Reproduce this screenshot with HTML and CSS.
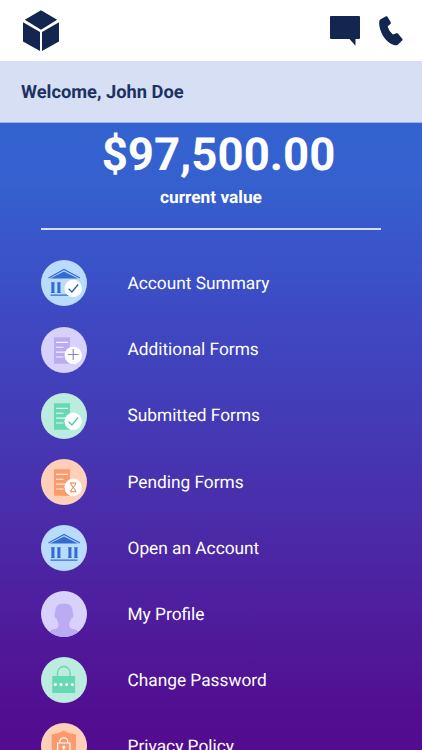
FILE: index.html
```html
<!DOCTYPE html>
<html lang="en">
<head>
<meta charset="utf-8">
<title>Account</title>
<link rel="stylesheet" href="styles.css">
</head>
<body>
<svg class="defs" width="0" height="0">
  <defs>
    <g id="bank-top">
      <path d="M7.5 18 23 9.4 39 18" fill="none" stroke="#346bd0" stroke-width="1.1"/>
      <path d="M9 18.4 23 11.6 37 18.4z" fill="#346bd0"/>
      <path d="M9.5 35.2h27" stroke="#346bd0" stroke-width="1.3"/>
      <path id="pillars" d="M10 22.300h3.700v1h-.3v8.700h.3v1H10v-1h.4v-8.700H10zM16.100 22.300h3.600v1h-.3v8.700h.3v1h-3.600v-1h.3v-8.700h-.3z" fill="#346bd0"/>
    </g>
    <g id="doc">
      <path d="M13 10.3h16v26.4H13z" fill="currentColor"/>
      <path d="M15 15.4h12M15 20.3h7.5M15 25.1h12M15 30h7.5" stroke="#fff" stroke-opacity=".85" stroke-width="1.1"/>
      <circle cx="32.2" cy="28.3" r="8.7" fill="#fff"/>
    </g>
    <path id="check" d="M27.6 28.8l3.3 3.2 6.2-7.5" fill="none" stroke-width="1.3"/>
  </defs>
</svg>
<header class="topbar">
  <svg class="logo" viewBox="0 0 36 42" width="36" height="42"><path d="M18 .3 34.2 9.8 18 19.7 1.8 9.8zM0 12.3l17 9.8v19L0 31.4zM36 12.3 19 22.1v19l17-9.7z"/></svg>
  <svg class="chat" viewBox="0 0 30 30" width="30" height="30"><path d="M1 0h28q1 0 1 1v21q0 1-1 1h-3.500v6.700L19.500 23H1q-1 0-1-1V1q0-1 1-1z"/></svg>
  <svg class="phone" viewBox="0 0 24 30" width="24" height="30"><path d="M1.600 3.200 7 .3q1-.5 1.500.5l3.200 5.500q.5 1-.3 1.600L8.600 10.500q1.300 4.600 5.300 8l3.500-1.300q1-.3 1.600.5l4.300 5q.7.900-.2 1.700l-4 4q-1.400 1.200-3.500.9Q8.500 27.300 3.800 19.500-.5 11.700.3 5.300.5 3.900 1.600 3.200z"/></svg>
</header>
<div class="welcome">Welcome, John Doe</div>
<main class="content">
  <div class="amount">$97,500.00</div>
  <div class="caption">current value</div>
  <hr class="rule">
  <nav class="menu">
    <a class="item"><svg class="icon blue" viewBox="0 0 46 46"><use href="#bank-top"/><circle cx="32.2" cy="28.3" r="8.700" fill="#fff"/><use href="#check" stroke="#2e5cba"/></svg><span>Account Summary</span></a>
    <a class="item"><svg class="icon violet" viewBox="0 0 46 46"><use href="#doc"/><path d="M26.800 27.500h10.800M32.200 22.100v10.800" stroke="#8c7dcc" stroke-width="1.100"/></svg><span>Additional Forms</span></a>
    <a class="item"><svg class="icon green" viewBox="0 0 46 46"><use href="#doc"/><use href="#check" stroke="#49cfa0"/></svg><span>Submitted Forms</span></a>
    <a class="item"><svg class="icon orange" viewBox="0 0 46 46"><use href="#doc"/><path d="M29 24h6.400M29 32.800h6.400M30 24v1.800l4.400 5.200v1.800M34.400 24v1.800L30 31v1.800" fill="none" stroke="#ee7b46" stroke-width="1"/></svg><span>Pending Forms</span></a>
    <a class="item"><svg class="icon blue" viewBox="0 0 46 46"><use href="#bank-top"/><use href="#pillars" x="17"/></svg><span>Open an Account</span></a>
    <a class="item"><svg class="icon violet" viewBox="0 0 46 46"><path d="M8 46v-5.500q2.500-2.200 6.500-2.800 4-.6 2.800-6-1-1.500-1.700-4.200-1.800-.2-2.200-3-.2-1.800.7-2.200-.8-9.800 8.800-9.800 9.600 0 8.800 9.800.9.400.7 2.200-.4 2.800-2.200 3-.7 2.700-1.700 4.200-1.200 5.400 2.800 6 4 .6 6.500 2.800V46z" fill="currentColor"/></svg><span>My Profile</span></a>
    <a class="item"><svg class="icon green" viewBox="0 0 46 46"><path d="M16.500 19.500v-3.700a6.300 6.300 0 0 1 12.600 0v3.700" fill="none" stroke="currentColor" stroke-width="1.300"/><path d="M11.300 19h22.800v17H11.300z" fill="currentColor"/><g fill="#fff"><circle cx="14.300" cy="27.500" r="1.500"/><circle cx="20" cy="27.500" r="1.500"/><circle cx="25.600" cy="27.500" r="1.500"/><circle cx="31.300" cy="27.500" r="1.500"/></g></svg><span>Change Password</span></a>
    <a class="item"><svg class="icon orange" viewBox="0 0 46 46"><path d="M22.800 7.500q5.500 3.500 12.200 4v12q0 9-12.200 15-12.200-6-12.200-15v-12q6.700-.5 12.200-4z" fill="currentColor"/><path d="M18.800 20v-1.200a4 4 0 0 1 8 0V20M16.600 20h12.400v10H16.600z" fill="none" stroke="#fff" stroke-width="1.200"/><circle cx="22.800" cy="24" r="1.500" fill="#fff"/><path d="M22.800 24v4" stroke="#fff" stroke-width="1.200"/></svg><span>Privacy Policy</span></a>
  </nav>
</main>
</body>
</html>
```

FILE: styles.css
```css
* { box-sizing: border-box; }
html, body { margin: 0; height: 100%; }
body {
  display: flex;
  flex-direction: column;
  height: 750px;
  overflow: hidden;
  font-family: Roboto, sans-serif;
  color: #fff;
  text-rendering: geometricPrecision;
}
.defs { display: none; }
.topbar {
  display: flex;
  flex: none;
  align-items: flex-start;
  height: 61px;
  padding: 10px 19px 0 23px;
  background: #fff;
  fill: #132650;
}
.chat { margin: 6px 19px 0 auto; }
.phone { margin-top: 6px; }
.welcome {
  flex: none;
  height: 62px;
  padding-left: 21px;
  background: #d7dff5;
  border-bottom: 1px solid #9fb3e6;
  color: #1d3264;
  font-size: 18.300px;
  font-weight: 700;
  line-height: 64px;
}
.content {
  flex: 1;
  min-height: 0;
  overflow: hidden;
  padding: 0 41px;
  background: linear-gradient(#3363d0 0, #3561cf 9%, #3d4bc4 29%, #4a2daa 62%, #520e91 94%, #530b8f 100%);
}
.amount {
  height: 60px;
  margin-top: 3px;
  text-align: center;
  font-size: 45.600px;
  font-weight: 700;
  line-height: 60px;
  padding-left: 15px;
}
.caption {
  text-align: center;
  font-size: 17.300px;
  font-weight: 700;
  line-height: 24px;
}
.rule {
  margin: 18px 0 0;
  border: 0;
  height: 2px;
  background: #d3dbf5;
}
.menu { padding-top: 20.300px; }
.item {
  display: flex;
  align-items: center;
  gap: 40.500px;
  height: 66.150px;
  font-size: 17.300px;
}
.item span { padding-top: 1.500px; }
.icon { width: 46px; height: 46px; flex: none; border-radius: 50%; }
.blue { background: #b9dbfc; color: #346bd0; }
.violet { background: #d8d1fb; color: #baabf3; }
.green { background: #bcebdf; color: #66d8b3; }
.orange { background: #ffcfba; color: #fc9a6b; }
```
